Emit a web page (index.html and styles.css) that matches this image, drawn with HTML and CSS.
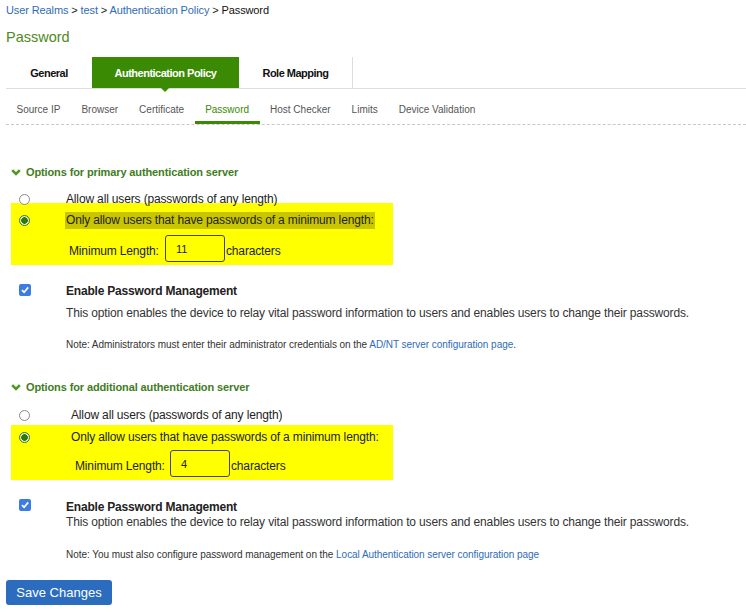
FILE: index.html
```html
<!DOCTYPE html>
<html>
<head>
<meta charset="utf-8">
<link rel="stylesheet" href="styles.css">
</head>
<body>
<div class="page">
  <div class="crumbs"><a class="lnk">User Realms</a> &gt; <a class="lnk">test</a> &gt; <a class="lnk">Authentication Policy</a> &gt; <span class="cur">Password</span></div>
  <div class="title">Password</div>

  <div class="tabs">
    <div class="tab tab-general">General</div>
    <div class="tab tab-active">Authentication Policy</div>
    <div class="tab tab-role">Role Mapping</div>
  </div>

  <div class="subtabs">
    <div class="sub">Source IP</div>
    <div class="sub">Browser</div>
    <div class="sub">Certificate</div>
    <div class="sub sub-active">Password</div>
    <div class="sub">Host Checker</div>
    <div class="sub">Limits</div>
    <div class="sub">Device Validation</div>
  </div>

  <div class="sec sec-one">
    <div class="sec-head">
      <svg class="chev" width="10" height="7" viewBox="0 0 10 7"><path d="M1.2 1.2 L5 5 L8.8 1.2" fill="none" stroke="#4b9a22" stroke-width="2.6"/></svg>
      <span>Options for primary authentication server</span>
    </div>
    <div class="opts">
      <div class="row row-first">
        <div class="ctl"><span class="radio"></span></div>
        <div class="lbl">Allow all users (passwords of any length)</div>
      </div>
      <div class="hl">
        <div class="row row-sel">
          <div class="ctl"><span class="radio radio-on"></span></div>
          <div class="lbl"><span class="mark">Only allow users that have passwords of a minimum length:</span></div>
        </div>
        <div class="minrow">
          <span class="minlbl">Minimum Length:</span><span class="inp">11</span><span class="unit">characters</span>
        </div>
      </div>
      <div class="row row-chk">
        <div class="ctl"><span class="chk"><svg width="12" height="12" viewBox="0 0 12 12"><path d="M3 6.2 L5.1 8.3 L9.2 3.4" fill="none" stroke="#fff" stroke-width="1.7"/></svg></span></div>
        <div class="lbl">
          <div class="chk-title">Enable Password Management</div>
          <div class="desc">This option enables the device to relay vital password information to users and enables users to change their passwords.</div>
          <div class="note">Note: Administrators must enter their administrator credentials on the <a class="lnk">AD/NT server configuration page</a>.</div>
        </div>
      </div>
    </div>
  </div>

  <div class="sec sec-two">
    <div class="sec-head">
      <svg class="chev" width="10" height="7" viewBox="0 0 10 7"><path d="M1.2 1.2 L5 5 L8.8 1.2" fill="none" stroke="#4b9a22" stroke-width="2.6"/></svg>
      <span>Options for additional authentication server</span>
    </div>
    <div class="opts">
      <div class="row row-first">
        <div class="ctl ctl-wide"><span class="radio"></span></div>
        <div class="lbl">Allow all users (passwords of any length)</div>
      </div>
      <div class="hl hl-two">
        <div class="row row-sel2">
          <div class="ctl ctl-wide"><span class="radio radio-on"></span></div>
          <div class="lbl">Only allow users that have passwords of a minimum length:</div>
        </div>
        <div class="minrow minrow-two">
          <span class="minlbl">Minimum Length:</span><span class="inp">4</span><span class="unit">characters</span>
        </div>
      </div>
      <div class="row row-chk2">
        <div class="ctl"><span class="chk"><svg width="12" height="12" viewBox="0 0 12 12"><path d="M3 6.2 L5.1 8.3 L9.2 3.4" fill="none" stroke="#fff" stroke-width="1.7"/></svg></span></div>
        <div class="lbl">
          <div class="chk-title">Enable Password Management</div>
          <div class="desc desc-tight">This option enables the device to relay vital password information to users and enables users to change their passwords.</div>
          <div class="note note-two">Note: You must also configure password management on the <a class="lnk">Local Authentication server configuration page</a></div>
        </div>
      </div>
    </div>
  </div>

  <button class="save">Save Changes</button>
</div>
</body>
</html>
```

FILE: styles.css
```css
* { box-sizing: border-box; }
html, body { margin: 0; padding: 0; background: #fff; }
body {
  font-family: "Liberation Sans", Arial, sans-serif;
  color: #222;
  width: 746px;
  height: 614px;
  overflow: hidden;
}
.page { padding: 3px 0 0 6px; }

.lnk { color: #2f6cb5; text-decoration: none; }

.crumbs { font-size: 11px; line-height: 14px; color: #222; letter-spacing: -0.11px; }
.crumbs .cur { color: #111; }

.title {
  margin-top: 11px;
  font-size: 14.5px;
  line-height: 18px;
  color: #4e8a22;
}

.tabs {
  margin-top: 11px;
  display: flex;
  height: 32px;
  border-bottom: 1px solid #ddd;
}
.tab {
  position: relative;
  height: 31px;
  display: flex;
  align-items: center;
  justify-content: center;
  font-size: 11px;
  font-weight: bold;
  letter-spacing: -0.5px;
  color: #111;
}
.tab-general { width: 86px; }
.tab-active { width: 147px; background: #3b8a03; color: #fff; }
.tab-active::after {
  content: "";
  position: absolute;
  left: 69px;
  top: 31px;
  border-left: 4px solid transparent;
  border-right: 4px solid transparent;
  border-top: 4px solid #3b8a03;
}
.tab-role { width: 114px; border-right: 1px solid #ddd; height: 32px; margin-bottom: -1px; }

.subtabs {
  display: flex;
  border-bottom: 1px dashed #c8c8c8;
}
.sub {
  padding: 15px 10.5px 5px;
  line-height: 12px;
  font-size: 10px;
  color: #555;
  border-bottom: 3px solid transparent;
}
.sub-active { color: #3b8a03; border-bottom-color: #3b8a03; }

.sec-head {
  display: flex;
  align-items: center;
  height: 14px;
  font-size: 11px;
  font-weight: bold;
  letter-spacing: -0.12px;
  color: #3f7d1e;
}
.chev { margin-left: 5px; margin-right: 5px; }
.sec-one { margin-top: 40px; }
.sec-two { margin-top: 29px; }

.opts { margin-left: 5px; }
.row { display: flex; align-items: center; font-size: 12px; letter-spacing: -0.15px; }
.ctl { width: 55px; flex: none; display: flex; }
.ctl-wide { width: 60px; }
.row-first { height: 14px; margin-top: 13px; }
.sec-two .row-first { margin-top: 14px; }

.radio {
  display: block;
  width: 11px;
  height: 11px;
  margin-left: 8px;
  border-radius: 50%;
  border: 1px solid #8a8a8a;
  background: #fff;
}
.radio-on {
  border-color: #3b7a12;
  background: radial-gradient(circle, #2f7a10 0 3px, #e2ebd8 3.6px);
}

.hl {
  margin-top: -3px;
  width: 382px;
  background: #ffff00;
  padding: 9px 0 3px;
}
.row-sel { height: 17px; }
.mark {
  display: inline-block;
  background: #c9c600;
  line-height: 17px;
  padding: 0 1px;
  margin-left: -1px;
}
.minrow {
  margin-top: 6px;
  display: flex;
  align-items: center;
  font-size: 12px;
  letter-spacing: -0.15px;
  padding-left: 58px;
}
.minlbl { width: 96px; flex: none; padding-top: 4px; }
.inp {
  width: 60px;
  height: 27px;
  border: 1px solid #444;
  border-radius: 3px;
  padding-left: 10px;
  display: flex;
  align-items: center;
  font-size: 11px;
  flex: none;
}
.unit { margin-left: 1px; padding-top: 4px; }

.hl-two { margin-top: 3px; padding: 4px 0 3px; }
.row-sel2 { height: 16px; }
.minrow-two { margin-top: 5px; padding-left: 64px; }
.minrow-two .minlbl { width: 95px; }

.row-chk, .row-chk2 { align-items: flex-start; }
.row-chk { margin-top: 19px; }
.row-chk2 { margin-top: 19px; }
.chk {
  display: flex;
  align-items: center;
  justify-content: center;
  width: 12px;
  height: 12px;
  margin-left: 8px;
  border-radius: 2px;
  background: #3d7ce3;
}
.chk-title { font-weight: bold; line-height: 14px; letter-spacing: -0.2px; color: #222; }
.row-chk .chk-title { margin-top: 0; }
.row-chk2 .chk-title { margin-top: 1px; }
.desc { margin-top: 8px; line-height: 14px; color: #333; }
.desc-tight { margin-top: 1px; }
.note { margin-top: 19px; font-size: 10px; line-height: 12px; color: #333; letter-spacing: -0.05px; }
.note-two { margin-top: 20px; }

.save {
  display: block;
  margin-top: 19px;
  width: 106px;
  height: 25px;
  border: none;
  border-radius: 3px;
  background: #2b6cbf;
  color: #fff;
  font-family: "Liberation Sans", Arial, sans-serif;
  font-size: 13px;
  padding: 0;
}
```
